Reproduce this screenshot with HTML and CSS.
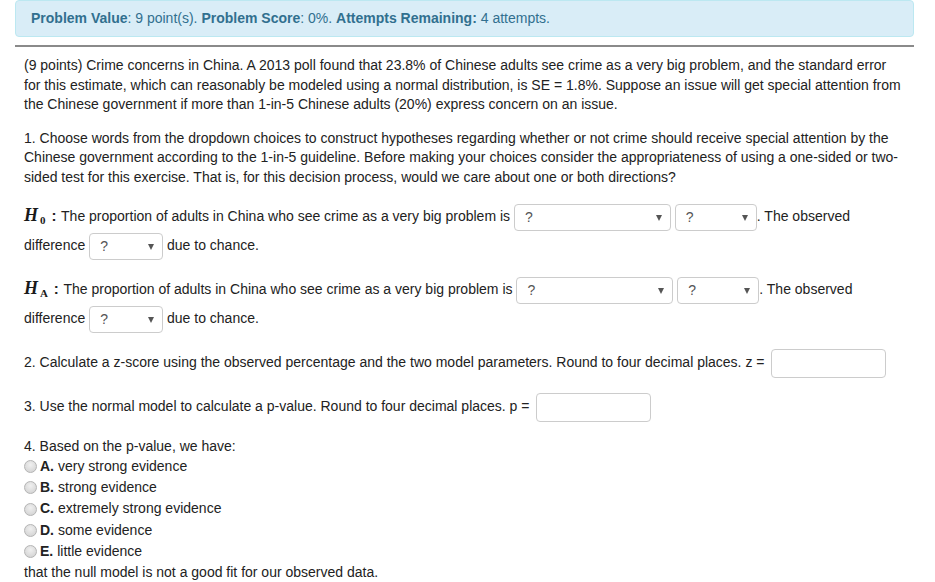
FILE: index.html
```html
<!DOCTYPE html>
<html>
<head>
<meta charset="utf-8">
<link rel="stylesheet" href="styles.css">
</head>
<body>
<div class="page">
  <div class="alert">
    <b>Problem Value</b>: 9 point(s). <b>Problem Score</b>: 0%. <b>Attempts Remaining:</b> 4 attempts.
  </div>
  <div class="rule"></div>
  <div class="problem">
    <p class="para">(9 points) Crime concerns in China. A 2013 poll found that 23.8% of Chinese adults see crime as a very big problem, and the standard error for this estimate, which can reasonably be modeled using a normal distribution, is SE = 1.8%. Suppose an issue will get special attention from the Chinese government if more than 1-in-5 Chinese adults (20%) express concern on an issue.</p>
    <p class="para">1. Choose words from the dropdown choices to construct hypotheses regarding whether or not crime should receive special attention by the Chinese government according to the 1-in-5 guideline. Before making your choices consider the appropriateness of using a one-sided or two-sided test for this exercise. That is, for this decision process, would we care about one or both directions?</p>
    <p class="hyp"><span class="math">H<sub>0</sub></span> <span class="colon">:</span> The proportion of adults in China who see crime as a very big problem is <span class="select sel-wide"><span class="q">?</span><span class="arrow"></span></span> <span class="select sel-mid"><span class="q">?</span><span class="arrow"></span></span>. The observed difference <span class="select sel-small"><span class="q">?</span><span class="arrow"></span></span> due to chance.</p>
    <p class="hyp"><span class="math">H<sub>A</sub></span> <span class="colon">:</span> The proportion of adults in China who see crime as a very big problem is <span class="select sel-wide"><span class="q">?</span><span class="arrow"></span></span> <span class="select sel-mid"><span class="q">?</span><span class="arrow"></span></span>. The observed difference <span class="select sel-small"><span class="q">?</span><span class="arrow"></span></span> due to chance.</p>
    <p class="answer">2. Calculate a z-score using the observed percentage and the two model parameters. Round to four decimal places. z = <span class="input"></span></p>
    <p class="answer">3. Use the normal model to calculate a p-value. Round to four decimal places. p = <span class="input"></span></p>
    <div class="choices">
      <div class="line lead">4. Based on the p-value, we have:</div>
      <div class="line"><span class="radio"></span><b>A.</b> very strong evidence</div>
      <div class="line"><span class="radio"></span><b>B.</b> strong evidence</div>
      <div class="line"><span class="radio"></span><b>C.</b> extremely strong evidence</div>
      <div class="line"><span class="radio"></span><b>D.</b> some evidence</div>
      <div class="line"><span class="radio"></span><b>E.</b> little evidence</div>
      <div class="line">that the null model is not a good fit for our observed data.</div>
    </div>
  </div>
</div>
</body>
</html>
```

FILE: styles.css
```css
html, body {
  margin: 0;
  padding: 0;
  background: #fff;
}
body {
  font-family: "Liberation Sans", Arial, sans-serif;
  font-size: 14px;
  color: #222;
}
.page {
  padding: 0 21px 0 15px;
}
.alert {
  background: #d9edf7;
  border: 1px solid #bce8f1;
  border-radius: 4px;
  color: #31708f;
  padding: 9px 15px 9px 15px;
  line-height: 17px;
  height: 17px;
}
.alert b {
  font-weight: bold;
}
.rule {
  margin-top: 8px;
  border-top: 2px solid #8a8a8a;
  height: 0;
}
.problem {
  padding: 9px 8px 0 9px;
}
.para {
  margin: 0 0 14px 0;
  line-height: 19.5px;
}
.hyp {
  margin: 0 0 14px 0;
  line-height: 29px;
}
.math {
  font-family: "Liberation Serif", "Times New Roman", serif;
  font-style: italic;
  font-weight: bold;
  font-size: 18px;
  color: #1a1a1a;
}
.math sub {
  font-style: normal;
  font-size: 11px;
  vertical-align: -3px;
  line-height: 0;
  margin-left: 2px;
}
.colon {
  font-weight: bold;
  font-size: 15px;
  margin-left: 2px;
  margin-right: 1px;
}
.select {
  display: inline-flex;
  align-items: center;
  justify-content: space-between;
  box-sizing: border-box;
  height: 27px;
  border: 1px solid #ccc;
  border-radius: 4px;
  background: #fff;
  vertical-align: middle;
  padding: 0 8px 0 10px;
  line-height: 1;
}
.select .q {
  font-size: 14px;
  color: #555;
}
.select .arrow {
  width: 0;
  height: 0;
  border-left: 3.5px solid transparent;
  border-right: 3.5px solid transparent;
  border-top: 6px solid #555;
  margin-top: 1px;
}
.sel-wide {
  width: 157px;
}
.sel-mid {
  width: 82px;
}
.sel-small {
  width: 74px;
}
.answer {
  margin: 0 0 14px 0;
  line-height: 30px;
  height: 30px;
}
.input {
  display: inline-block;
  box-sizing: border-box;
  width: 115px;
  height: 29px;
  border: 1px solid #ccc;
  border-radius: 4px;
  background: #fff;
  vertical-align: middle;
  margin-left: 3px;
}
.choices {
  margin-top: 16px;
}
.line {
  line-height: 21.2px;
  display: flex;
  align-items: center;
}
.lead {
  line-height: 19px;
}
.line b {
  margin-right: 4px;
}
.radio {
  display: inline-block;
  box-sizing: border-box;
  width: 13px;
  height: 13px;
  border-radius: 50%;
  border: 1px solid #b4b4b4;
  background: radial-gradient(circle at 50% 35%, #f0f0f0 0%, #dcdcdc 60%, #cfcfcf 100%);
  margin-right: 3px;
}
```
